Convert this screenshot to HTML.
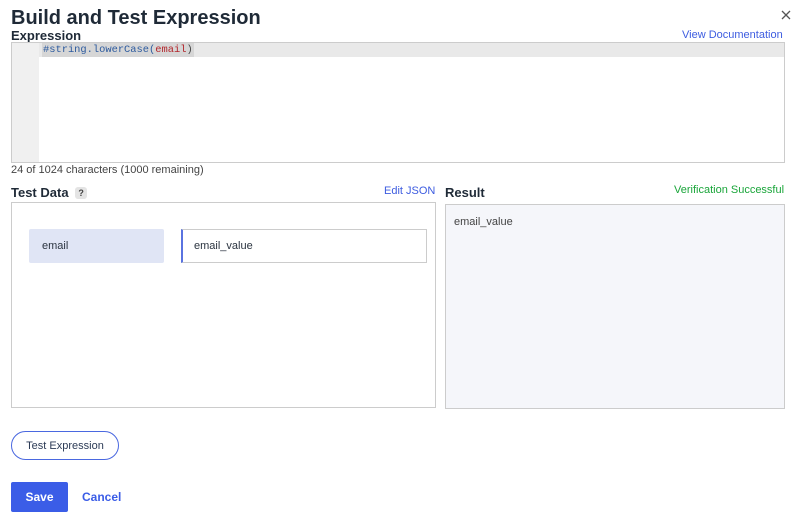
<!DOCTYPE html>
<html><head><style>
*{box-sizing:border-box;margin:0;padding:0}
body{width:803px;height:519px;background:#fff;font-family:"Liberation Sans",sans-serif;position:relative;overflow:hidden;color:#2b3440}
.a{position:absolute}
h1{position:absolute;left:11px;top:7px;font-size:20px;font-weight:bold;color:#1f2a37}
.lbl{font-size:13px;font-weight:bold;color:#1f2a37}
.link{color:#3d5ce0;font-size:11px}
</style></head><body>
<h1>Build and Test Expression</h1>
<svg class="a" style="left:781px;top:10px" width="10" height="10" viewBox="0 0 10 10"><path d="M1 1L9 9M9 1L1 9" stroke="#555" stroke-width="1.3"/></svg>
<div class="a lbl" style="left:11px;top:28px">Expression</div>
<div class="a link" style="left:682px;top:29px">View Documentation</div>
<div class="a" style="left:11px;top:42px;width:774px;height:121px;border:1px solid #ccc">
  <div class="a" style="left:0;top:0;width:27px;height:119px;background:#f0f0f0"></div>
  <div class="a" style="left:27px;top:0;width:745px;height:14px;background:#e9e9e9"></div>
  <div class="a" style="left:30px;top:0;height:14px;background:#d6d6d6;font-family:'Liberation Mono',monospace;font-size:10.4px;line-height:14px;color:#2c5a9e;padding:0 1px">#string.lowerCase(<span style="color:#b3262c">email</span><span style="color:#444">)</span></div>
</div>
<div class="a" style="left:11px;top:164px;font-size:11px;color:#444">24 of 1024 characters (1000 remaining)</div>
<div class="a lbl" style="left:11px;top:185px">Test Data <span style="display:inline-block;width:12px;height:12px;border-radius:3px;background:#e4e4e4;font-size:9px;text-align:center;line-height:12px;color:#444;margin-left:3px;vertical-align:1px">?</span></div>
<div class="a link" style="left:384px;top:185px">Edit JSON</div>
<div class="a" style="left:11px;top:202px;width:425px;height:206px;border:1px solid #ccc">
  <div class="a" style="left:17px;top:26px;width:135px;height:34px;background:#e0e5f5;border-radius:2px;font-size:11px;line-height:34px;padding-left:13px">email</div>
  <div class="a" style="left:169px;top:26px;width:246px;height:34px;border:1px solid #ccc;border-left:2px solid #5a73e0;font-size:11px;line-height:33px;padding-left:11px">email_value</div>
</div>
<div class="a lbl" style="left:445px;top:185px">Result</div>
<div class="a" style="left:674px;top:184px;font-size:11px;color:#1aa53a">Verification Successful</div>
<div class="a" style="left:445px;top:204px;width:340px;height:205px;border:1px solid #ccc;background:#f5f6fa;font-size:11px;color:#444;padding:11px 8px">email_value</div>
<div class="a" style="left:11px;top:431px;width:108px;height:29px;border:1px solid #4a68e0;border-radius:15px;font-size:11px;line-height:29px;text-align:center;color:#2b3a55">Test Expression</div>
<div class="a" style="left:11px;top:482px;width:57px;height:30px;background:#3b5de7;border-radius:2px;color:#fff;font-size:12px;font-weight:bold;line-height:30px;text-align:center">Save</div>
<div class="a" style="left:82px;top:490px;color:#3b5de7;font-size:12px;font-weight:bold">Cancel</div>
</body></html>
